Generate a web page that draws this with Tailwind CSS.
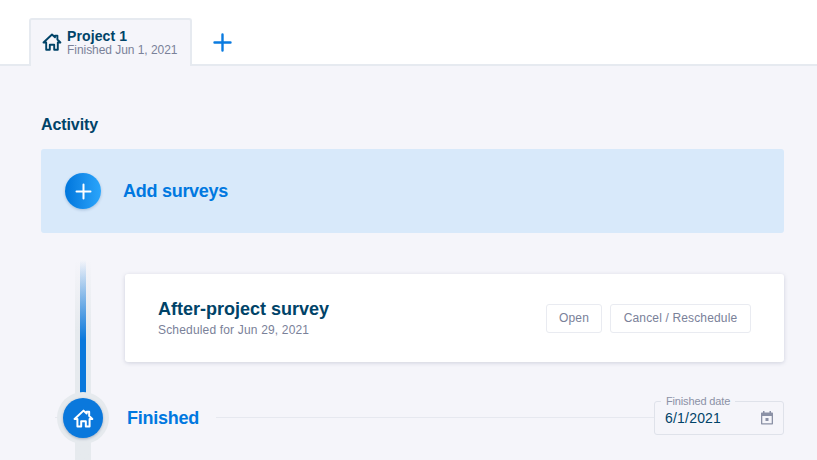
<!DOCTYPE html>
<html lang="en">
<head>
    <meta charset="UTF-8">
    <title>Project activity</title>
    <script src="https://cdn.jsdelivr.net/npm/@tailwindcss/browser@4"></script>
</head>
<body class="bg-[#f5f5fa] font-['Liberation_Sans',sans-serif] text-[#004368]">
    <div class="w-[817px] h-[460px] overflow-hidden flex flex-col">
        <!-- tabs -->
        <div class="h-[66px] shrink-0 bg-white border-b-2 border-[#e6eaf0] pl-[29px] flex items-end">
            <div class="w-[163px] h-[48px] -mb-[2px] bg-[#f5f5fa] border-2 border-b-0 border-[#e6eaf0] rounded-t-[3px] flex items-center pl-[11px] gap-[5px]">
                <svg class="w-[20px] h-[20px] -mt-[2px]" viewBox="0 0 20 20" fill="none" stroke="#004368" stroke-width="1.9" stroke-linejoin="round" stroke-linecap="round">
                    <path d="M1.5 10.5 10 2.5l3 2.8V3.6h2.4v3.9l3 3h-2.6v7.2h-3.6v-5h-4.4v5H4.2v-7.2z"/>
                </svg>
                <div class="flex flex-col">
                    <span class="text-[14px] leading-[15px] font-bold tracking-[0.1px]">Project 1</span>
                    <span class="text-[12px] leading-[13px] tracking-[-0.05px] text-[#7a8199]">Finished Jun 1, 2021</span>
                </div>
            </div>
            <div class="ml-[21px] mb-[12px] w-[19px] h-[19px]">
                <svg class="w-[19px] h-[19px]" viewBox="0 0 19 19" stroke="#0a7be0" stroke-width="2.4" stroke-linecap="round">
                    <path d="M9.5 1.5v16M1.5 9.5h16"/>
                </svg>
            </div>
        </div>

        <div class="pl-[41px] pr-[33px] flex-1 flex flex-col">
            <h2 class="mt-[50px] text-[16px] leading-[18px] font-bold tracking-[-0.1px]">Activity</h2>

            <div class="mt-[15px] h-[84px] bg-[#d8e9fa] rounded-[3px] flex items-center pl-[24px]">
                <div class="w-[36px] h-[36px] rounded-full bg-gradient-to-r from-[#0076dc] to-[#2aa5fb] shadow-[0_1px_3px_rgba(0,60,120,0.25)] flex items-center justify-center">
                    <svg class="w-[17px] h-[17px]" viewBox="0 0 17 17" stroke="#fff" stroke-width="2" stroke-linecap="round"><path d="M8.5 1.5v14M1.5 8.5h14"/></svg>
                </div>
                <span class="ml-[22px] text-[18px] font-bold tracking-[-0.27px] text-[#0078e0]">Add surveys</span>
            </div>

            <!-- timeline -->
            <div class="relative flex-1">
                <div class="absolute left-[34px] top-[27px] bottom-0 w-[16px] bg-gradient-to-b from-[#e6eaee]/0 via-[#e6eaee] via-[35%] to-[#e6eaee]"></div>
                <div class="absolute left-[39px] top-[27px] h-[145px] w-[6px] bg-gradient-to-b from-[#0a78dc]/0 via-[#0a78dc] via-[55%] to-[#0a78dc]"></div>

                <div class="relative ml-[84px] mt-[41px] h-[88px] bg-white rounded-[3px] shadow-[0_1px_4px_rgba(60,70,110,0.2)] flex items-center pl-[33px] pr-[33px]">
                    <div class="flex-1">
                        <div class="text-[18px] leading-[22px] font-bold">After-project survey</div>
                        <div class="text-[12px] leading-[16px] mt-[2px] tracking-[0.17px] text-[#7a8199]">Scheduled for Jun 29, 2021</div>
                    </div>
                    <button class="h-[29px] w-[56px] border border-[#e9ebf1] rounded-[3px] text-[12px] tracking-[0.15px] text-[#7a8199]">Open</button>
                    <button class="ml-[8px] h-[29px] w-[141px] border border-[#e9ebf1] rounded-[3px] text-[12px] tracking-[0.15px] text-[#7a8199]">Cancel / Reschedule</button>
                </div>

                <div class="relative mt-[39px] h-[34px] flex items-center">
                    <div class="absolute left-[14px] top-[16px] w-[599px] h-px bg-[#e6e8ef]"></div>
                    <div class="absolute left-[16px] -top-[9px] w-[52px] h-[52px] rounded-full bg-[#e6eaee] flex items-center justify-center">
                        <div class="w-[40px] h-[40px] rounded-full bg-[#0a78dc] shadow-[0_1px_3px_rgba(0,40,90,0.3)] flex items-center justify-center">
                            <svg class="w-[21px] h-[21px]" viewBox="0 0 20 20" fill="none" stroke="#fff" stroke-width="1.9" stroke-linejoin="round" stroke-linecap="round">
                                <path d="M1.5 10.5 10 2.5l3 2.8V3.6h2.4v3.9l3 3h-2.6v7.2h-3.6v-5h-4.4v5H4.2v-7.2z"/>
                            </svg>
                        </div>
                    </div>
                    <span class="relative ml-[68px] pl-[18px] w-[107px] mt-[1px] bg-[#f5f5fa] text-[18px] font-bold tracking-[-0.25px] text-[#0078e0]">Finished</span>

                    <div class="relative ml-auto w-[130px] h-[34px] bg-[#f5f5fa] border border-[#dfe2ea] rounded-[3px] flex items-center pl-[10px] pr-[9px]">
                        <span class="absolute left-[6px] -top-[7px] px-[5px] bg-[#f5f5fa] text-[11px] leading-[12px] tracking-[-0.15px] text-[#8b91a6]">Finished date</span>
                        <span class="flex-1 text-[14px] tracking-[0.2px]">6/1/2021</span>
                        <svg class="w-[14px] h-[14px]" viewBox="0 0 14 14" fill="#8b91a6">
                            <path d="M3 0h1.5v1.5h5V0H11v1.5h1c.6 0 1 .4 1 1v10c0 .6-.4 1-1 1H2c-.6 0-1-.4-1-1v-10c0-.6.4-1 1-1h1zM2.3 5v7.2h9.4V5z"/>
                            <rect x="5.5" y="7" width="3" height="3"/>
                        </svg>
                    </div>
                </div>
            </div>
        </div>
    </div>
</body>
</html>
